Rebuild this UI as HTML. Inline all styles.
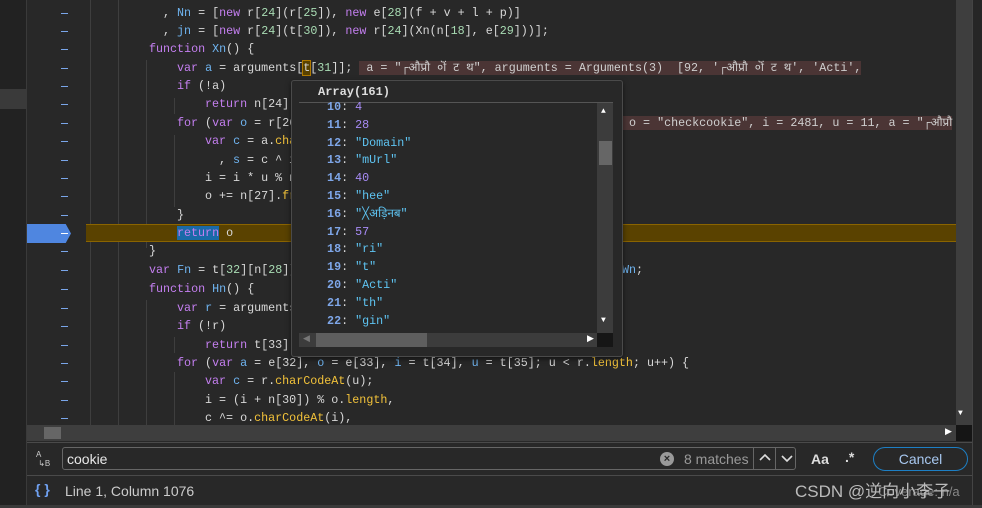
<!DOCTYPE html><html><head><style>
body{margin:0;width:982px;height:508px;background:#282828;overflow:hidden;position:relative;font-family:"Liberation Mono",monospace;font-size:11.7px;color:#d8d8d8}
.a{position:absolute}
.ln{position:absolute;left:0;white-space:pre;height:18px;line-height:18px}
.k{color:#c47ff0}.v{color:#6fb4f0}.n{color:#a9dcb4}.s{color:#5ec4f2}.p{color:#f2c23a}.m{color:#a78bf5}
.d{position:absolute;left:61px;width:7px;height:1px;background:#7aa6ea}
.g{position:absolute;width:1px;background:#3e3e3e}
.iv{background:#4b3535;color:#cfcfcf}
</style></head><body>
<div class="a" style="left:0;top:0;width:26px;height:508px;background:#222"></div>
<div class="a" style="left:0;top:89px;width:26px;height:20px;background:#3a3a3a"></div>
<div class="a" style="left:26px;top:0;width:1px;height:508px;background:#3a3a3a"></div>
<div class="g" style="left:90px;top:0;height:425px"></div>
<div class="g" style="left:118px;top:0;height:425px"></div>
<div class="g" style="left:146px;top:60px;height:188px"></div>
<div class="g" style="left:174px;top:98px;height:16px"></div>
<div class="g" style="left:174px;top:135px;height:72px"></div>
<div class="g" style="left:146px;top:300px;height:125px"></div>
<div class="g" style="left:174px;top:337px;height:16px"></div>
<div class="g" style="left:174px;top:372px;height:53px"></div>
<div class="a" style="left:86px;top:224px;width:871px;height:18px;background:#5a4200;border-top:1px solid #8a6400;border-bottom:1px solid #8a6400;box-sizing:border-box"></div>
<div class="a" style="left:27px;top:224px;width:44px;height:19px;background:#4f86e0;clip-path:polygon(0 0,88% 0,100% 50%,88% 100%,0 100%)"></div>
<div class="d" style="top:13px"></div><div class="d" style="top:31px"></div><div class="d" style="top:49px"></div><div class="d" style="top:68px"></div><div class="d" style="top:86px"></div><div class="d" style="top:104px"></div><div class="d" style="top:123px"></div><div class="d" style="top:141px"></div><div class="d" style="top:160px"></div><div class="d" style="top:178px"></div><div class="d" style="top:196px"></div><div class="d" style="top:215px"></div><div class="d" style="top:233px;background:#fff"></div><div class="d" style="top:251px"></div><div class="d" style="top:270px"></div><div class="d" style="top:289px"></div><div class="d" style="top:308px"></div><div class="d" style="top:326px"></div><div class="d" style="top:345px"></div><div class="d" style="top:363px"></div><div class="d" style="top:381px"></div><div class="d" style="top:400px"></div><div class="d" style="top:418px"></div>
<div class="ln" style="top:4px;left:163px">, <span class="v">Nn</span> = [<span class="k">new</span> r[<span class="n">24</span>](r[<span class="n">25</span>]), <span class="k">new</span> e[<span class="n">28</span>](f + v + l + p)]</div>
<div class="ln" style="top:22px;left:163px">, <span class="v">jn</span> = [<span class="k">new</span> r[<span class="n">24</span>](t[<span class="n">30</span>]), <span class="k">new</span> r[<span class="n">24</span>](Xn(n[<span class="n">18</span>], e[<span class="n">29</span>]))];</div>
<div class="ln" style="top:40px;left:149px"><span class="k">function</span> <span class="v">Xn</span>() {</div>
<div class="ln" style="top:59px;left:177px"><span class="k">var</span> <span class="v">a</span> = arguments[<span style="outline:1px solid #b07a00;background:#5a4200">t</span>[<span class="n">31</span>]]; <span class="iv">&nbsp;a = "┌औप्रौ ०ॊं ट थ", arguments = Arguments(3) &nbsp;[92, '┌औप्रौ ०ॊं ट थ', 'Acti',</span></div>
<div class="ln" style="top:77px;left:177px"><span class="k">if</span> (!a)</div>
<div class="ln" style="top:95px;left:205px"><span class="k">return</span> n[24]</div>
<div class="ln" style="top:114px;left:177px"><span class="k">for</span> (<span class="k">var</span> <span class="v">o</span> = r[26</div>
<div class="ln" style="top:114px;left:622px"><span class="iv">&nbsp;o = "checkcookie", i = 2481, u = 11, a = "┌औप्रौ</span></div>
<div class="ln" style="top:132px;left:205px"><span class="k">var</span> <span class="v">c</span> = a.<span class="p">cha</span></div>
<div class="ln" style="top:151px;left:219px">, <span class="v">s</span> = c ^ i</div>
<div class="ln" style="top:169px;left:205px">i = i * u % n</div>
<div class="ln" style="top:187px;left:205px">o += n[27].<span class="p">fr</span></div>
<div class="ln" style="top:206px;left:177px">}</div>
<div class="ln" style="top:224px;left:177px"><span class="k" style="background:#1a6aa8">return</span> o</div>
<div class="ln" style="top:242px;left:149px">}</div>
<div class="ln" style="top:261px;left:149px"><span class="k">var</span> <span class="v">Fn</span> = t[<span class="n">32</span>][n[<span class="n">28</span>]]</div>
<div class="ln" style="top:261px;left:622px"><span class="v">Wn</span>;</div>
<div class="ln" style="top:280px;left:149px"><span class="k">function</span> <span class="v">Hn</span>() {</div>
<div class="ln" style="top:299px;left:177px"><span class="k">var</span> <span class="v">r</span> = arguments</div>
<div class="ln" style="top:317px;left:177px"><span class="k">if</span> (!r)</div>
<div class="ln" style="top:336px;left:205px"><span class="k">return</span> t[33]</div>
<div class="ln" style="top:354px;left:177px"><span class="k">for</span> (<span class="k">var</span> <span class="v">a</span> = e[32], <span class="v">o</span> = e[33], <span class="v">i</span> = t[34], <span class="v">u</span> = t[35]; u &lt; r.<span class="p">length</span>; u++) {</div>
<div class="ln" style="top:372px;left:205px"><span class="k">var</span> <span class="v">c</span> = r.<span class="p">charCodeAt</span>(u);</div>
<div class="ln" style="top:391px;left:205px">i = (i + n[30]) % o.<span class="p">length</span>,</div>
<div class="ln" style="top:409px;left:205px">c ^= o.<span class="p">charCodeAt</span>(i),</div>
<div class="a" style="left:291px;top:80px;width:330px;height:275px;background:#282828;border:1px solid #4a4a4a;border-radius:3px;box-shadow:0 2px 6px #0008"></div>
<div class="a" style="left:318px;top:85px;font-weight:bold;color:#ddd;font-size:12px">Array(161)</div>
<div class="a" style="left:299px;top:102px;width:314px;height:1px;background:#555"></div>
<div class="a" style="left:597px;top:103px;width:16px;height:230px;background:#3c3c3c"></div>
<div class="a" style="left:599px;top:141px;width:13px;height:24px;background:#666"></div>
<div class="a" style="left:601px;top:107px;color:#fff;font-size:8px">▲</div>
<div class="a" style="left:601px;top:316px;color:#fff;font-size:8px">▼</div>
<div class="a" style="left:299px;top:333px;width:298px;height:14px;background:#3c3c3c"></div>
<div class="a" style="left:316px;top:333px;width:111px;height:14px;background:#5e5e5e"></div>
<div class="a" style="left:597px;top:333px;width:16px;height:14px;background:#161616"></div>
<div class="a" style="left:587px;top:334px;color:#fff;font-size:9px">▶</div>
<div class="a" style="left:303px;top:334px;color:#777;font-size:9px">◀</div>
<div class="a" style="left:299px;top:99px;line-height:17.8px;white-space:pre"><span style="color:#7ea6e8;font-weight:bold">    10</span>: <span class="m">4</span>
<span style="color:#7ea6e8;font-weight:bold">    11</span>: <span class="m">28</span>
<span style="color:#7ea6e8;font-weight:bold">    12</span>: <span class="s">"Domain"</span>
<span style="color:#7ea6e8;font-weight:bold">    13</span>: <span class="s">"mUrl"</span>
<span style="color:#7ea6e8;font-weight:bold">    14</span>: <span class="m">40</span>
<span style="color:#7ea6e8;font-weight:bold">    15</span>: <span class="s">"hee"</span>
<span style="color:#7ea6e8;font-weight:bold">    16</span>: <span class="s">"╳अड़िनब"</span>
<span style="color:#7ea6e8;font-weight:bold">    17</span>: <span class="m">57</span>
<span style="color:#7ea6e8;font-weight:bold">    18</span>: <span class="s">"ri"</span>
<span style="color:#7ea6e8;font-weight:bold">    19</span>: <span class="s">"t"</span>
<span style="color:#7ea6e8;font-weight:bold">    20</span>: <span class="s">"Acti"</span>
<span style="color:#7ea6e8;font-weight:bold">    21</span>: <span class="s">"th"</span>
<span style="color:#7ea6e8;font-weight:bold">    22</span>: <span class="s">"gin"</span></div>
<div class="a" style="left:956px;top:0;width:16px;height:425px;background:#3e3e3e"></div>
<div class="a" style="left:972px;top:0;width:10px;height:508px;background:#262626;border-left:1px solid #444"></div>
<div class="a" style="left:958px;top:409px;color:#fff;font-size:8px">▼</div>
<div class="a" style="left:27px;top:425px;width:929px;height:16px;background:#3e3e3e"></div>
<div class="a" style="left:44px;top:427px;width:17px;height:12px;background:#666"></div>
<div class="a" style="left:956px;top:425px;width:16px;height:16px;background:#151515"></div>
<div class="a" style="left:945px;top:427px;color:#fff;font-size:9px">▶</div>
<div class="a" style="left:27px;top:442px;width:945px;height:1px;background:#4a4a4a"></div>
<div class="a" style="left:36px;top:450px;color:#ccc;font-family:'Liberation Sans';font-size:8px;line-height:9px">A<br>&nbsp;↳B</div>
<div class="a" style="left:62px;top:447px;width:734px;height:23px;border:1px solid #666;border-radius:3px;box-sizing:border-box"></div>
<div class="a" style="left:67px;top:451px;font-family:'Liberation Sans';font-size:14px;color:#e8e8e8">cookie</div>
<div class="a" style="left:660px;top:452px;width:14px;height:14px;border-radius:50%;background:#999;color:#282828;font-size:11px;line-height:14px;text-align:center;font-family:'Liberation Sans';font-weight:bold">×</div>
<div class="a" style="left:684px;top:451px;font-family:'Liberation Sans';font-size:14px;color:#999">8 matches</div>
<div class="a" style="left:753px;top:447px;width:1px;height:23px;background:#666"></div>
<div class="a" style="left:775px;top:447px;width:1px;height:23px;background:#666"></div>
<svg class="a" style="left:758px;top:452px" width="14" height="12"><path d="M2 8 L7 3 L12 8" stroke="#ddd" stroke-width="1.6" fill="none"/></svg>
<svg class="a" style="left:780px;top:452px" width="14" height="12"><path d="M2 4 L7 9 L12 4" stroke="#ddd" stroke-width="1.6" fill="none"/></svg>
<div class="a" style="left:811px;top:451px;font-family:'Liberation Sans';font-weight:bold;font-size:14px;color:#ddd">Aa</div>
<div class="a" style="left:845px;top:449px;font-family:'Liberation Sans';font-weight:bold;font-size:14px;color:#ddd">.*</div>
<div class="a" style="left:873px;top:447px;width:95px;height:24px;border:1px solid #1d7fc4;border-radius:12px;box-sizing:border-box;color:#a8c8f0;font-family:'Liberation Sans';font-size:14px;text-align:center;line-height:22px">Cancel</div>
<div class="a" style="left:27px;top:475px;width:945px;height:1px;background:#4a4a4a"></div>
<div class="a" style="left:35px;top:481px;color:#6fa0f0;font-family:'Liberation Sans';font-size:14px;font-weight:bold">{ }</div>
<div class="a" style="left:65px;top:483px;color:#ccc;font-family:'Liberation Sans';font-size:14px">Line 1, Column 1076</div>
<div class="a" style="left:878px;top:484px;color:#888;font-family:'Liberation Sans';font-size:13px">Coverage: n/a</div>
<div class="a" style="left:795px;top:477px;color:#bbb;font-family:'Liberation Sans','Noto Sans CJK SC',sans-serif;font-size:17px">CSDN @逆向小李子</div>
<div class="a" style="left:0;top:505px;width:982px;height:3px;background:#3a3a3a"></div>
</body></html>
